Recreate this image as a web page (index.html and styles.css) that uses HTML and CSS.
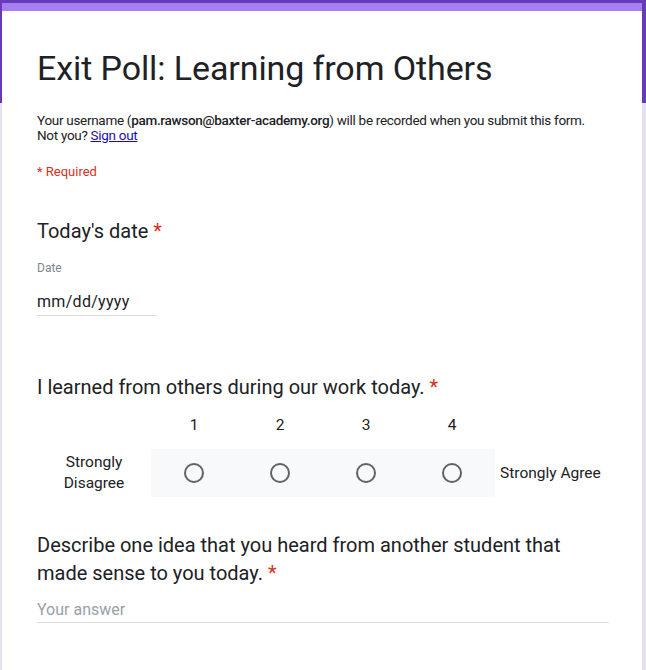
FILE: index.html
```html
<!DOCTYPE html>
<html lang="en">
<head>
    <meta charset="UTF-8">
    <meta name="viewport" content="width=device-width, initial-scale=1.0">
    <title>Exit Poll: Learning from Others</title>
    <link rel="stylesheet" href="styles.css">
</head>
<body>
    <div class="form-card">
        <h1 class="form-title">Exit Poll: Learning from Others</h1>
        <p class="user-note">
            Your username (<b>pam.rawson@baxter-academy.org</b>) will be recorded when you submit this form.<br>
            Not you? <a href="#">Sign out</a>
        </p>
        <p class="required-note">* Required</p>

        <div class="question">
            <div class="q-title">Today's date <span class="star">*</span></div>
            <div class="date-label">Date</div>
            <div class="date-input">mm/dd/yyyy</div>
        </div>

        <div class="question scale-q">
            <div class="q-title">I learned from others during our work today. <span class="star">*</span></div>
            <div class="scale">
                <div class="scale-label"></div>
                <div class="scale-num">1</div>
                <div class="scale-num">2</div>
                <div class="scale-num">3</div>
                <div class="scale-num">4</div>
                <div class="scale-label"></div>

                <div class="scale-label">Strongly<br>Disagree</div>
                <div class="scale-cell"><span class="radio"></span></div>
                <div class="scale-cell"><span class="radio"></span></div>
                <div class="scale-cell"><span class="radio"></span></div>
                <div class="scale-cell"><span class="radio"></span></div>
                <div class="scale-label right">Strongly Agree</div>
            </div>
        </div>

        <div class="question text-q">
            <div class="q-title">Describe one idea that you heard from another student that made sense to you today. <span class="star">*</span></div>
            <div class="answer">Your answer</div>
        </div>
    </div>
</body>
</html>
```

FILE: styles.css
```css
body {
    margin: 0;
    font-family: Roboto, 'Noto Sans', sans-serif;
    color: #202124;
    background: linear-gradient(#673ab7 0, #673ab7 103px, #e6e1f0 103px);
    min-height: 670px;
}
.form-card {
    margin: 3px 0 0 2px;
    width: 640px;
    box-sizing: border-box;
    background: white;
    border-top: 8px solid #a680f3;
    padding: 37px 33px 60px 35px;
}
.form-title {
    font-size: 34px;
    font-weight: 400;
    line-height: 40px;
    margin: 0;
    letter-spacing: -0.1px;
}
.user-note {
    font-size: 13.5px;
    line-height: 15px;
    letter-spacing: -0.3px;
    margin: 25px 0 0;
}
.user-note b { font-weight: 500; }
.user-note a { color: #1a0dab; }
.required-note {
    color: #d93025;
    font-size: 13px;
    margin: 21px 0 0;
}
.star { color: #d93025; }
.question {
    margin-top: 38px;
}
.q-title {
    font-size: 20px;
    line-height: 28px;
}
.date-label {
    font-size: 12px;
    color: #80868b;
    margin-top: 16px;
}
.date-input {
    font-size: 16px;
    width: 120px;
    padding: 17px 0 4px;
    border-bottom: 1px solid #dadce0;
    letter-spacing: 0.3px;
}
.scale-q {
    margin-top: 57px;
}
.scale {
    display: grid;
    grid-template-columns: 114px repeat(4, 86px) auto;
    margin-top: 14px;
    font-size: 15.5px;
}
.scale-num {
    text-align: center;
    height: 34px;
    line-height: 20px;
}
.scale-label {
    text-align: center;
    line-height: 21px;
    display: flex;
    align-items: center;
    justify-content: center;
}
.scale-label.right {
    justify-content: flex-start;
    padding-left: 5px;
}
.scale-cell {
    background: #f8f9fa;
    height: 48px;
    display: flex;
    align-items: center;
    justify-content: center;
}
.radio {
    width: 16px;
    height: 16px;
    border: 2px solid #5f6368;
    border-radius: 50%;
}
.text-q {
    margin-top: 34px;
}
.answer {
    font-size: 16px;
    color: #9aa0a6;
    margin-top: 13px;
    padding-bottom: 3px;
    border-bottom: 1px solid #dadce0;
}
```
